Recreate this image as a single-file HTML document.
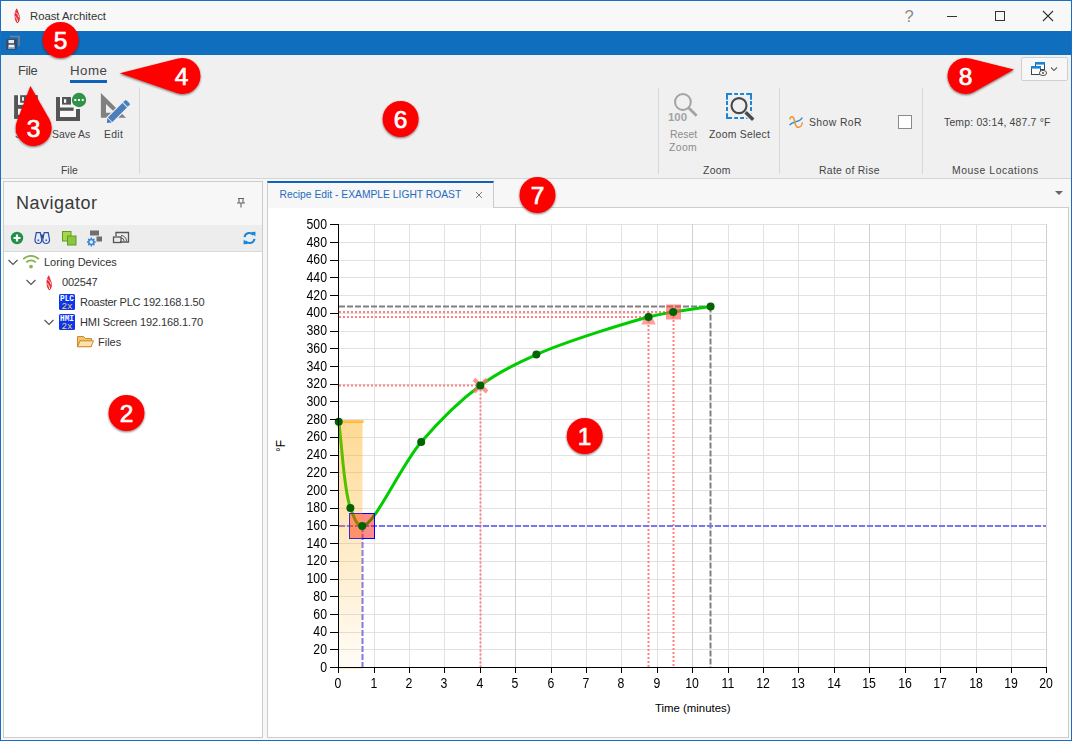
<!DOCTYPE html>
<html><head><meta charset="utf-8">
<style>
*{margin:0;padding:0;box-sizing:border-box}
html,body{width:1072px;height:741px;overflow:hidden;background:#fff;font-family:"Liberation Sans",sans-serif;color:#222}
.a{position:absolute;white-space:nowrap}
svg.a{overflow:visible}
.yl{right:745px;width:40px;text-align:right;font-size:13.5px;color:#000;line-height:16px;transform:scale(0.91,1.08);transform-origin:100% 50%}
.xl{top:675.5px;width:40px;text-align:center;font-size:13.5px;color:#000;line-height:16px;transform:scale(0.91,1.08);transform-origin:50% 50%}
.rt{font-size:10.4px;color:#444;line-height:12px}
.tr{font-size:11px;color:#333;line-height:14px}
.bd{width:30px;text-align:center;font-size:24.5px;font-weight:normal;-webkit-text-stroke:0.7px #fff;color:#fff;line-height:28px}
</style></head><body>
<div class="a" style="left:0;top:0;width:1072px;height:741px;background:#1a6fc4"></div>
<!-- title bar -->
<div class="a" style="left:1px;top:1px;width:1070px;height:30px;background:#f8f8f8"></div>
<div class="a" style="left:1px;top:30px;width:1070px;height:1px;background:#fdfdfd"></div>
<svg class="a" style="left:13.5px;top:8px" width="7" height="16" viewBox="0 0 7 16">
 <path d="M2.8 0.3C0.8 3 0.2 6 0.6 9C0.9 12 2 14.6 3.4 15.3C5.4 14.3 6.2 11.2 5.8 8.3C5.5 6.3 4.5 5.2 4.2 3.6C3.9 2.4 3.3 1.2 2.8 0.3Z" fill="#e8303a"/>
 <path d="M0.7 8.2C2.2 9.6 3.6 11.2 3.6 14M1.4 4.3C3 5.4 4.6 7 4.9 9.3" fill="none" stroke="#f8f8f8" stroke-width="0.9"/>
</svg>
<div class="a" style="left:30px;top:9px;font-size:11.3px;color:#333;line-height:14px">Roast Architect</div>
<div class="a" style="left:904.5px;top:7px;font-size:16.5px;color:#8a8a8a;line-height:18px">?</div>
<div class="a" style="left:947px;top:16px;width:10px;height:1px;background:#333"></div>
<div class="a" style="left:995px;top:11px;width:10px;height:10px;border:1px solid #333"></div>
<svg class="a" style="left:1042px;top:10px" width="12" height="12" viewBox="0 0 12 12"><path d="M1 1L11 11M11 1L1 11" stroke="#333" stroke-width="1.1"/></svg>
<!-- blue QAT bar -->
<div class="a" style="left:1px;top:31px;width:1070px;height:24px;background:#106ebe"></div>
<svg class="a" style="left:5px;top:35px" width="16" height="16" viewBox="0 0 16 16">
 <path d="M5 1.5H14V11" fill="none" stroke="#7a7f8a" stroke-width="1.6"/>
 <rect x="1.3" y="4.3" width="10.5" height="10.5" fill="#3e4658"/>
 <rect x="3.5" y="5" width="5.5" height="3.2" fill="#e8edf5"/>
 <rect x="3.5" y="9.7" width="6" height="4.3" fill="#eef3fa"/>
 <rect x="3.5" y="12.2" width="6" height="1.8" fill="#6fa3d8"/>
</svg>
<!-- ribbon -->
<div class="a" style="left:1px;top:55px;width:1070px;height:123px;background:#f0f0f0"></div>
<div class="a" style="left:1px;top:178px;width:1070px;height:1px;background:#d5d5d5"></div>
<div class="a" style="left:18px;top:63px;font-size:12.9px;color:#444;line-height:15px;letter-spacing:-0.35px">File</div>
<div class="a" style="left:70px;top:63px;font-size:13.3px;color:#444;line-height:15px;letter-spacing:0.5px">Home</div>
<div class="a" style="left:70px;top:80px;width:37px;height:3px;background:#0f62b8"></div>
<!-- view button -->
<div class="a" style="left:1021px;top:57px;width:47px;height:24px;border:1px solid #cfcfcf;border-radius:2px;background:#f7f7f7"></div>
<svg class="a" style="left:1030px;top:61px" width="30" height="16" viewBox="0 0 30 16">
 <rect x="5.5" y="1.5" width="9" height="7" fill="#fff" stroke="#444" stroke-width="1"/>
 <rect x="5" y="1" width="10" height="2.6" fill="#1c83d4"/>
 <rect x="1.5" y="5.5" width="9" height="8" fill="#fff" stroke="#444" stroke-width="1"/>
 <rect x="1" y="5" width="10" height="2.6" fill="#1c83d4"/>
 <ellipse cx="13" cy="12" rx="3.6" ry="2.6" fill="#f7f7f7" stroke="#555" stroke-width="1"/>
 <circle cx="13" cy="12" r="1" fill="#555"/>
 <path d="M21 6.5L24 9.5L27 6.5" fill="none" stroke="#666" stroke-width="1.1"/>
</svg>
<!-- File group -->
<svg class="a" style="left:13px;top:94px" width="26" height="26" viewBox="0 0 26 26">
 <rect x="1.1" y="1.2" width="23.5" height="23.5" fill="#fafafa"/>
 <g fill="#555"><rect x="1.1" y="1.2" width="3.9" height="23.5"/><rect x="1.1" y="20.8" width="23.5" height="3.9"/><rect x="20.7" y="1.2" width="3.9" height="23.5"/><rect x="17.5" y="1.2" width="7.1" height="3.9"/>
 <rect x="7.1" y="1.2" width="8.6" height="7.5"/><rect x="5" y="10.9" width="15.7" height="3.9"/></g>
 <rect x="9.1" y="3.1" width="1.8" height="3.7" fill="#fff"/>
</svg>
<div class="a rt" style="left:15px;top:129px">Save</div>
<svg class="a" style="left:55px;top:92px" width="32" height="30" viewBox="0 0 32 30">
 <path d="M3 5H23V27H3Z" fill="#f8f8f8"/>
 <path d="M3 7V27H23V17" fill="none" stroke="#555" stroke-width="4"/>
 <path d="M1 7H5" stroke="#555" stroke-width="4"/>
 <rect x="7" y="5" width="9" height="7.6" fill="#555"/><rect x="9" y="7.2" width="2.2" height="3.6" fill="#fff"/>
 <rect x="5" y="15.5" width="13.6" height="3.3" fill="#555"/>
 <circle cx="24" cy="8" r="7.2" fill="#2f9447"/>
 <rect x="19.3" y="7" width="2" height="2" fill="#fff"/><rect x="23" y="7" width="2" height="2" fill="#fff"/><rect x="26.7" y="7" width="2" height="2" fill="#fff"/>
</svg>
<div class="a rt" style="left:52px;top:129px">Save As</div>
<svg class="a" style="left:96px;top:88px" width="40" height="40" viewBox="0 0 40 40">
 <path d="M4.9 4.9V29.7H30Z" fill="#808080"/>
 <path d="M10 15.9V24.8H19Z" fill="#f0f0f0"/>
 <path d="M10.25 35.65L10.52 29.27L29.61 10.18L35.72 16.29L16.63 35.38Z" fill="#f0f0f0"/>
 <path d="M10.87 34.57L11.33 35.03L15.84 34.59L11.31 30.06ZM11.88 29.50L16.40 34.02L30.97 19.46L26.44 14.93ZM27.08 14.29L31.61 18.82L34.01 16.42L33.23 14.93L30.97 12.67L29.48 11.89Z" fill="#4a7ebc"/>
</svg>
<div class="a rt" style="left:104px;top:129px;letter-spacing:0.3px">Edit</div>
<div class="a rt" style="left:61px;top:165px">File</div>
<div class="a" style="left:139px;top:88px;width:1px;height:86px;background:#d8d8d8"></div>
<!-- Zoom group -->
<div class="a" style="left:658px;top:88px;width:1px;height:86px;background:#d8d8d8"></div>
<svg class="a" style="left:666px;top:91px" width="34" height="32" viewBox="0 0 34 32">
 <circle cx="16.9" cy="11" r="7.9" fill="none" stroke="#a3a3a3" stroke-width="2"/>
 <path d="M22.6 16.7L30.6 24.7" stroke="#a3a3a3" stroke-width="2.8"/>
 <text x="2" y="29.6" font-family="Liberation Sans" font-weight="bold" font-size="10.2" fill="#a3a3a3" textLength="19" lengthAdjust="spacingAndGlyphs">100</text>
</svg>
<div class="a rt" style="left:670px;top:129px;color:#8c8c8c">Reset</div>
<div class="a rt" style="left:669px;top:141.5px;color:#8c8c8c;letter-spacing:0.4px">Zoom</div>
<svg class="a" style="left:724px;top:91px" width="34" height="32" viewBox="0 0 34 32">
 <path d="M3 8.8V3H8M10.2 3H14M16.1 3H20M22.2 3H27V8.8M27 10V13.9M27 16V19.9M27 22.2V27H22.2M20 27H16.1M14 27H10.2M8 27H3V22.2M3 19.9V16M3 13.9V10" fill="none" stroke="#1c85d6" stroke-width="2"/>
 <path d="M21.2 20.8L29.9 29.5" stroke="#f0f0f0" stroke-width="6.5"/>
 <circle cx="15" cy="14.6" r="7.5" fill="none" stroke="#4a4a4a" stroke-width="2.1"/>
 <path d="M21.6 21.2L29.2 28.8" stroke="#4a4a4a" stroke-width="3.4"/>
</svg>
<div class="a rt" style="left:709px;top:129px;letter-spacing:0.25px">Zoom Select</div>
<div class="a rt" style="left:703px;top:165px;letter-spacing:0.3px">Zoom</div>
<div class="a" style="left:779px;top:88px;width:1px;height:86px;background:#d8d8d8"></div>
<!-- RoR group -->
<svg class="a" style="left:788px;top:115px" width="16" height="14" viewBox="0 0 16 14">
 <path d="M1.6 10.2C3 8 5 7.5 7 7C10 6.3 13 5.5 14.3 2.5" fill="none" stroke="#2a8fd8" stroke-width="1.5"/>
 <path d="M2 4.5C2 1 5.5 0.5 6.3 5C7 9 8 12.4 10 12.4C12.5 12.4 14.3 10 14.3 7.3" fill="none" stroke="#f39235" stroke-width="1.5"/>
</svg>
<div class="a rt" style="left:809px;top:116.7px;letter-spacing:0.4px">Show RoR</div>
<div class="a" style="left:898px;top:115px;width:14px;height:14px;border:1px solid #8a8a8a;background:#fff"></div>
<div class="a rt" style="left:819px;top:165px;letter-spacing:0.3px">Rate of Rise</div>
<div class="a" style="left:922px;top:88px;width:1px;height:86px;background:#d8d8d8"></div>
<div class="a rt" style="left:944px;top:116.5px;letter-spacing:0.2px">Temp: 03:14, 487.7 °F</div>
<div class="a rt" style="left:952px;top:165px;letter-spacing:0.55px">Mouse Locations</div>

<!-- main area -->
<div class="a" style="left:1px;top:179px;width:1070px;height:561px;background:#f7f7f7"></div>
<!-- navigator -->
<div class="a" style="left:3px;top:181px;width:260px;height:557px;border:1px solid #cccccc;background:#fff"></div>
<div class="a" style="left:4px;top:182px;width:258px;height:43px;background:#f7f7f7"></div>
<div class="a" style="left:4px;top:225px;width:258px;height:27px;background:#ededed;border-bottom:1px solid #d9d9d9"></div>
<div class="a" style="left:16px;top:192.7px;font-size:18px;color:#3a3a3a;letter-spacing:0.5px;line-height:20px">Navigator</div>
<svg class="a" style="left:236px;top:197px" width="10" height="11" viewBox="0 0 10 11"><path d="M2 1.5H8M3 1.5V5.5M7 1.5V5.5M1 6H9M5 6V10.5" fill="none" stroke="#666" stroke-width="1.1"/></svg>
<!-- toolbar icons -->
<svg class="a" style="left:10px;top:230px" width="130" height="18" viewBox="0 0 130 18">
 <circle cx="7" cy="8" r="6.2" fill="#1f9144"/><path d="M7 4.5V11.5M3.5 8H10.5" stroke="#fff" stroke-width="2.2"/>
 <rect x="30.5" y="4.5" width="3.5" height="4" fill="#2d4c9e"/>
 <g fill="#e6ecf8" stroke="#2d4c9e" stroke-width="1.2"><path d="M26.3 2.6H30.3L31.7 9.5A3.4 3.4 0 1 1 25 9.5Z"/><path d="M34.2 2.6H38.2L39.5 9.5A3.4 3.4 0 1 1 32.8 9.5Z"/></g>
 <circle cx="28.3" cy="10.3" r="1" fill="#3b6bd1"/><circle cx="36.2" cy="10.3" r="1" fill="#3b6bd1"/>
 <rect x="52.5" y="1.5" width="8.5" height="9.5" fill="#a6d64a" stroke="#5e9b1f" stroke-width="1"/>
 <rect x="57.5" y="6" width="8.5" height="9" fill="#8cc63f" stroke="#5e9b1f" stroke-width="1"/>
 <rect x="80" y="0.5" width="9" height="5" fill="#6e6e6e"/>
 <rect x="86.5" y="6.5" width="5.5" height="5" fill="#6e6e6e"/>
 <circle cx="81.3" cy="12" r="2.5" fill="none" stroke="#3a8ad6" stroke-width="1.6"/>
 <path d="M81.3 7.6V9.4M81.3 14.6V16.4M76.9 12H78.7M83.9 12H85.7M78.2 8.9L79.4 10.1M83.2 13.9L84.4 15.1M84.4 8.9L83.2 10.1M79.4 13.9L78.2 15.1" stroke="#3a8ad6" stroke-width="1.5"/>
 <path d="M106 6V2.5H118.5V12H110" fill="none" stroke="#555" stroke-width="1.3"/>
 <rect x="103.5" y="7" width="7.5" height="5.5" fill="none" stroke="#555" stroke-width="1.3"/>
 <path d="M111 8A3 3 0 0 1 114 11M111 5.5A5.5 5.5 0 0 1 116.5 11" fill="none" stroke="#555" stroke-width="1"/>
</svg>
<svg class="a" style="left:242px;top:231px" width="15" height="14" viewBox="0 0 15 14">
 <path d="M2.5 6.2A5 5 0 0 1 11.5 4" fill="none" stroke="#1a86d9" stroke-width="2"/>
 <path d="M9 1L13.5 0.8L13.3 5.5Z" fill="#1a86d9"/>
 <path d="M12.5 7.8A5 5 0 0 1 3.5 10" fill="none" stroke="#1a86d9" stroke-width="2"/>
 <path d="M6 13L1.5 13.2L1.7 8.5Z" fill="#1a86d9"/>
</svg>
<!-- tree -->
<svg class="a" style="left:6px;top:254px" width="90" height="96" viewBox="0 0 90 96">
 <g fill="none" stroke="#555" stroke-width="1.2"><path d="M2.5 6L7 10.5L11.5 6"/><path d="M20.5 26L25 30.5L29.5 26"/><path d="M38.5 66L43 70.5L47.5 66"/></g>
 <g fill="none" stroke="#8bb156" stroke-width="1.8"><path d="M17.2 5.2A11 11 0 0 1 32.8 5.2"/><path d="M20.2 8.4A6.8 6.8 0 0 1 29.8 8.4"/></g>
 <circle cx="25" cy="12.6" r="1.9" fill="#8bb156"/>
 
 <rect x="53" y="40" width="16" height="16" rx="1.5" fill="#0b35f0"/>
 <rect x="53" y="60" width="16" height="16" rx="1.5" fill="#0b35f0"/>
 <path d="M71.5 82.5H77.5L79.5 84.5H85.5V92.5H71.5Z" fill="#f3c56a" stroke="#c97b2c" stroke-width="0.9"/>
 <path d="M71.5 92.8L74 86.8H87.5L85 92.8Z" fill="#fde3a4" stroke="#c97b2c" stroke-width="0.9"/>
</svg>
<svg class="a" style="left:59px;top:294px" width="16" height="16" viewBox="0 0 16 16"><text x="8" y="7.3" text-anchor="middle" font-family="Liberation Mono" font-weight="bold" font-size="8.6" fill="#fff" textLength="14" lengthAdjust="spacingAndGlyphs">PLC</text><text x="8" y="14.8" text-anchor="middle" font-family="Liberation Mono" font-size="8.6" fill="#ffd84a" textLength="11" lengthAdjust="spacingAndGlyphs">2x</text></svg>
<svg class="a" style="left:59px;top:314px" width="16" height="16" viewBox="0 0 16 16"><text x="8" y="7.3" text-anchor="middle" font-family="Liberation Mono" font-weight="bold" font-size="8.6" fill="#fff" textLength="14" lengthAdjust="spacingAndGlyphs">HMI</text><text x="8" y="14.8" text-anchor="middle" font-family="Liberation Mono" font-size="8.6" fill="#ffd84a" textLength="11" lengthAdjust="spacingAndGlyphs">2x</text></svg>
<div class="a tr" style="left:44px;top:255px">Loring Devices</div>
<div class="a tr" style="left:62px;top:275px;letter-spacing:-0.2px">002547</div>
<div class="a tr" style="left:80px;top:295px;letter-spacing:-0.25px">Roaster PLC 192.168.1.50</div>
<div class="a tr" style="left:80px;top:315px;letter-spacing:-0.1px">HMI Screen 192.168.1.70</div>
<div class="a tr" style="left:98px;top:335px">Files</div>

<svg class="a" style="left:46px;top:275px" width="7" height="16" viewBox="0 0 7 16">
 <path d="M2.8 0.3C0.8 3 0.2 6 0.6 9C0.9 12 2 14.6 3.4 15.3C5.4 14.3 6.2 11.2 5.8 8.3C5.5 6.3 4.5 5.2 4.2 3.6C3.9 2.4 3.3 1.2 2.8 0.3Z" fill="#e8303a"/>
 <path d="M0.7 8.2C2.2 9.6 3.6 11.2 3.6 14M1.4 4.3C3 5.4 4.6 7 4.9 9.3" fill="none" stroke="#ffffff" stroke-width="0.9"/>
</svg>
<!-- doc area -->
<div class="a" style="left:267px;top:207px;width:802px;height:531px;border:1px solid #cccccc;border-top:none;background:#fff"></div>
<div class="a" style="left:493px;top:207px;width:576px;height:1px;background:#cccccc"></div>
<div class="a" style="left:267px;top:181px;width:227px;height:27px;background:#f7f7f7;border-top:2px solid #0f62b8;border-right:1px solid #cccccc;border-left:1px solid #cccccc"></div>
<div class="a" style="left:279.5px;top:189px;font-size:10.3px;color:#1f6bbf;line-height:12px">Recipe Edit - EXAMPLE LIGHT ROAST</div>
<svg class="a" style="left:475px;top:191px" width="8" height="8" viewBox="0 0 8 8"><path d="M1 1L7 7M7 1L1 7" stroke="#777" stroke-width="1"/></svg>
<svg class="a" style="left:1055px;top:191px" width="8" height="5" viewBox="0 0 8 5"><path d="M0 0H8L4 4Z" fill="#666"/></svg>
<svg class="a" style="left:0;top:0" width="1072" height="741" viewBox="0 0 1072 741">
<path d="M374.5 224V667M409.5 224V667M444.5 224V667M480.5 224V667M551.5 224V667M586.5 224V667M621.5 224V667M657.5 224V667M728.5 224V667M763.5 224V667M798.5 224V667M834.5 224V667M905.5 224V667M940.5 224V667M976.5 224V667M1011.5 224V667M338 649.5H1047M338 632.5H1047M338 614.5H1047M338 596.5H1047M338 579.5H1047M338 561.5H1047M338 543.5H1047M338 525.5H1047M338 508.5H1047M338 490.5H1047M338 472.5H1047M338 455.5H1047M338 437.5H1047M338 419.5H1047M338 401.5H1047M338 384.5H1047M338 366.5H1047M338 348.5H1047M338 331.5H1047M338 313.5H1047M338 295.5H1047M338 277.5H1047M338 260.5H1047M338 242.5H1047M338 224.5H1047" stroke="#e2e2e2" stroke-width="1" fill="none"/>
<path d="M515.5 224V667M692.5 224V667M869.5 224V667M1046.5 224V667" stroke="#d0d0d0" stroke-width="1" fill="none"/>
<path d="M339 306.5H710.6M710.5 306.5V667" stroke="#808080" stroke-width="2" stroke-dasharray="6 2" fill="none"/>
<path d="M339 385.5H480.3M480.5 385.5V667M339 312H673.2M673.5 312V667M339 317H648.5M648.5 317V667" stroke="#ff8080" stroke-width="2" stroke-dasharray="2 2" fill="none"/>
<path d="M339 526H1046M362.5 526V667" stroke="#7878f2" stroke-width="2" stroke-dasharray="6 2" fill="none"/>
<path d="M338.7 421.7 C342.60 450.47 343.82 490.39 350.4 508 C353.67 516.76 356.67 525.91 362.2 526 C374.27 526.19 400.26 466.36 421.2 442 C439.89 420.26 459.84 400.52 480.3 385.5 C498.41 372.21 513.97 364.44 536.4 354.6 C566.88 341.22 624.50 323.43 648.5 317 C659.58 314.03 664.09 313.59 673.2 312 C684.35 310.05 698.13 308.33 710.6 306.5" stroke="#00cc00" stroke-width="3" fill="none"/>
<path d="M474 379.2L487 392M487 379.2L474 392" stroke="#ff7070" stroke-opacity="0.75" stroke-width="4"/>
<path d="M648.5 310L655.8 324.5H641.2Z" fill="#ff6060" fill-opacity="0.6"/>
<rect x="666" y="304.5" width="15" height="15" fill="#ff5050" fill-opacity="0.6"/>
<rect x="349.5" y="513.5" width="25" height="25" fill="#ff0000" fill-opacity="0.45" stroke="#0000ff" stroke-width="1"/>
<defs><linearGradient id="bg" x1="0" y1="0" x2="0" y2="1"><stop offset="0" stop-color="#ffa500" stop-opacity="0.42"/><stop offset="1" stop-color="#ffa500" stop-opacity="0.03"/></linearGradient></defs>
<rect x="339" y="422" width="23.5" height="245.5" fill="url(#bg)"/>
<path d="M339 421.5H362.5" stroke="#ffa500" stroke-opacity="0.65" stroke-width="3" stroke-linecap="round"/>
<path d="M339 668H362.5" stroke="#ffa500" stroke-opacity="0.5" stroke-width="1"/>
<g fill="#006400"><circle cx="338.7" cy="421.7" r="4"/><circle cx="350.4" cy="508" r="4"/><circle cx="362.2" cy="526" r="4"/><circle cx="421.2" cy="442" r="4"/><circle cx="480.3" cy="385.5" r="4"/><circle cx="536.4" cy="354.6" r="4"/><circle cx="648.5" cy="317" r="4"/><circle cx="673.2" cy="312" r="4"/><circle cx="710.6" cy="306.5" r="4"/></g>
<path d="M338.5 224V668M338 667.5H1047M330 667.5H338M330 649.5H338M330 632.5H338M330 614.5H338M330 596.5H338M330 579.5H338M330 561.5H338M330 543.5H338M330 525.5H338M330 508.5H338M330 490.5H338M330 472.5H338M330 455.5H338M330 437.5H338M330 419.5H338M330 401.5H338M330 384.5H338M330 366.5H338M330 348.5H338M330 331.5H338M330 313.5H338M330 295.5H338M330 277.5H338M330 260.5H338M330 242.5H338M330 224.5H338M338.5 667V673M374.5 667V673M409.5 667V673M444.5 667V673M480.5 667V673M515.5 667V673M551.5 667V673M586.5 667V673M621.5 667V673M657.5 667V673M692.5 667V673M728.5 667V673M763.5 667V673M798.5 667V673M834.5 667V673M869.5 667V673M905.5 667V673M940.5 667V673M976.5 667V673M1011.5 667V673M1046.5 667V673" stroke="#000" stroke-width="1" fill="none"/>
</svg>
<div class="a yl" style="top:659.7px">0</div>
<div class="a yl" style="top:642.0px">20</div>
<div class="a yl" style="top:624.3px">40</div>
<div class="a yl" style="top:606.6px">60</div>
<div class="a yl" style="top:588.8px">80</div>
<div class="a yl" style="top:571.1px">100</div>
<div class="a yl" style="top:553.4px">120</div>
<div class="a yl" style="top:535.7px">140</div>
<div class="a yl" style="top:518.0px">160</div>
<div class="a yl" style="top:500.3px">180</div>
<div class="a yl" style="top:482.6px">200</div>
<div class="a yl" style="top:464.8px">220</div>
<div class="a yl" style="top:447.1px">240</div>
<div class="a yl" style="top:429.4px">260</div>
<div class="a yl" style="top:411.7px">280</div>
<div class="a yl" style="top:394.0px">300</div>
<div class="a yl" style="top:376.3px">320</div>
<div class="a yl" style="top:358.5px">340</div>
<div class="a yl" style="top:340.8px">360</div>
<div class="a yl" style="top:323.1px">380</div>
<div class="a yl" style="top:305.4px">400</div>
<div class="a yl" style="top:287.7px">420</div>
<div class="a yl" style="top:270.0px">440</div>
<div class="a yl" style="top:252.3px">460</div>
<div class="a yl" style="top:234.5px">480</div>
<div class="a yl" style="top:216.8px">500</div>
<div class="a xl" style="left:318.1px">0</div>
<div class="a xl" style="left:354.1px">1</div>
<div class="a xl" style="left:389.1px">2</div>
<div class="a xl" style="left:424.1px">3</div>
<div class="a xl" style="left:460.1px">4</div>
<div class="a xl" style="left:495.1px">5</div>
<div class="a xl" style="left:531.1px">6</div>
<div class="a xl" style="left:566.1px">7</div>
<div class="a xl" style="left:601.1px">8</div>
<div class="a xl" style="left:637.1px">9</div>
<div class="a xl" style="left:672.1px">10</div>
<div class="a xl" style="left:708.1px">11</div>
<div class="a xl" style="left:743.1px">12</div>
<div class="a xl" style="left:778.1px">13</div>
<div class="a xl" style="left:814.1px">14</div>
<div class="a xl" style="left:849.1px">15</div>
<div class="a xl" style="left:885.1px">16</div>
<div class="a xl" style="left:920.1px">17</div>
<div class="a xl" style="left:956.1px">18</div>
<div class="a xl" style="left:991.1px">19</div>
<div class="a xl" style="left:1026.1px">20</div>
<div class="a" style="left:655px;top:701px;font-size:11.4px;color:#000;line-height:14px">Time (minutes)</div>
<div class="a" style="left:274px;top:452px;font-size:12px;color:#000;transform:rotate(-90deg);transform-origin:0 0">°F</div>
<svg class="a" style="left:0;top:0" width="1072" height="741" viewBox="0 0 1072 741">
<defs><filter id="sh" x="-20%" y="-20%" width="140%" height="150%"><feGaussianBlur in="SourceAlpha" stdDeviation="0.8"/><feOffset dy="1" result="b"/><feFlood flood-color="#000" flood-opacity="0.55"/><feComposite in2="b" operator="in"/><feMerge><feMergeNode/><feMergeNode in="SourceGraphic"/></feMerge></filter></defs>
<g fill="#ff0000" filter="url(#sh)">
<circle cx="584.7" cy="436" r="18"/>
<circle cx="126.5" cy="413" r="18"/>
<path d="M30.4 86L49.32 119.06A18 18 0 1 1 16.87 121.61Z"/>
<path d="M119.8 73.3L178.08 58.55A18 18 0 1 1 176.60 93.01Z"/>
<circle cx="60.6" cy="40" r="18"/>
<circle cx="400.6" cy="119" r="18"/>
<circle cx="537.5" cy="195" r="18"/>
<path d="M1014 69.6L974.26 91.73A18 18 0 1 1 969.88 58.54Z"/>
</g></svg>
<div class="a bd" style="left:569.7px;top:422.7px">1</div>
<div class="a bd" style="left:111.5px;top:399.7px">2</div>
<div class="a bd" style="left:18.7px;top:114.7px">3</div>
<div class="a bd" style="left:166.5px;top:62.7px">4</div>
<div class="a bd" style="left:45.6px;top:26.7px">5</div>
<div class="a bd" style="left:385.6px;top:105.7px">6</div>
<div class="a bd" style="left:522.5px;top:181.7px">7</div>
<div class="a bd" style="left:950.5px;top:62.7px">8</div>
</body></html>
